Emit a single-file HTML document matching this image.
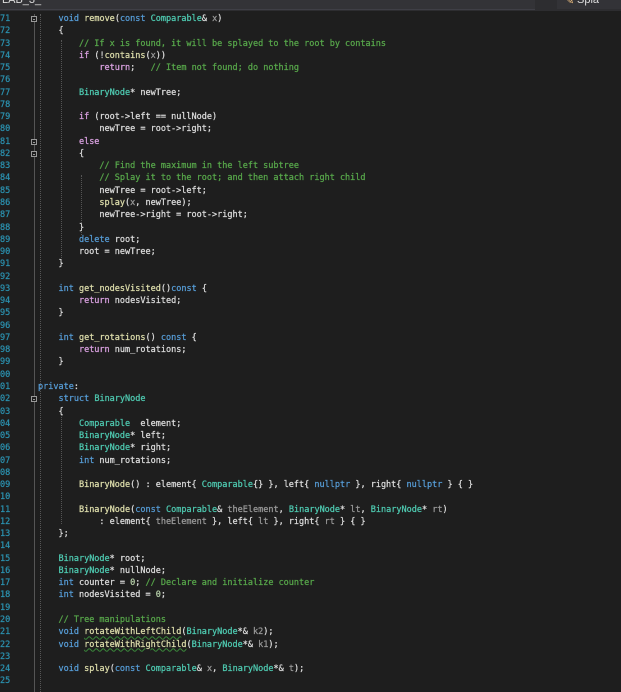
<!DOCTYPE html>
<html><head><style>
body{margin:0;width:621px;height:692px;background:#1e1e1e;overflow:hidden;position:relative;font-family:"Liberation Mono",monospace;}
.top{position:absolute;left:0;top:0;width:621px;height:11px;background:#2d2d30;}
.top .a{position:absolute;left:0;top:0;width:535px;height:9px;background:#333337;border-bottom:1px solid #3f3f46;}
.top .b{position:absolute;left:557px;top:0;width:64px;height:9px;background:#333337;}
.top span{position:absolute;color:#ddd;font-family:"Liberation Sans",sans-serif;font-size:11px;top:-6px;}
pre{position:absolute;margin:0;top:13px;font-size:8.5px;line-height:12.26px;color:#dcdcdc;-webkit-text-stroke:0.25px currentColor;}
#ln{left:0;color:#2b91af;}
#code{left:38px;}
.k{color:#569cd6}.t{color:#4ec9b0}.f{color:#dcdcaa}.c{color:#57a64a}.p{color:#9a9a9a}.n{color:#b5cea8}.m{color:#d8a0df}
.fold{position:absolute;left:31px;width:6px;height:6px;border:1px solid #999;box-sizing:border-box;background:#1e1e1e;}
.fold:after{content:"";position:absolute;left:1px;top:2px;width:2px;height:1px;background:#999;}
.vl{position:absolute;left:34px;top:14px;width:1px;height:678px;background:#555;}
.g{position:absolute;border-left:1px dotted #555;}
.sq{text-decoration:underline wavy #3a8a3a;text-decoration-thickness:1px;}
</style></head><body>
<div class="top"><div class="a"><span style="left:2px">LAB_3_</span></div><div class="b"><span style="left:8px;color:#f0c080">✎</span><span style="left:20px">Spla</span></div></div>
<div class="vl"></div>
<div class="g" style="left:40px;top:14px;height:678px"></div>
<div class="g" style="left:61px;top:40px;height:220px"></div>
<div class="g" style="left:81px;top:175px;height:60px"></div>
<div class="g" style="left:61px;top:414px;height:110px"></div>
<div class="fold" style="top:16px"></div>
<div class="fold" style="top:139px"></div>
<div class="fold" style="top:151px"></div>
<div class="fold" style="top:396px"></div>
<pre id="ln">71
72
73
74
75
76
77
78
79
80
81
82
83
84
85
86
87
88
89
90
91
92
93
94
95
96
97
98
99
00
01
02
03
04
05
06
07
08
09
10
11
12
13
14
15
16
17
18
19
20
21
22
23
24
25</pre>
<pre id="code">    <span class="k">void</span> <span class="f">remove</span>(<span class="k">const</span> <span class="t">Comparable</span>&amp; <span class="p">x</span>)
    {
        <span class="c">// If x is found, it will be splayed to the root by contains</span>
        <span class="m">if</span> (!<span class="f">contains</span>(<span class="p">x</span>))
            <span class="m">return</span>;   <span class="c">// Item not found; do nothing</span>

        <span class="t">BinaryNode</span>* newTree;

        <span class="m">if</span> (root-&gt;left == nullNode)
            newTree = root-&gt;right;
        <span class="m">else</span>
        {
            <span class="c">// Find the maximum in the left subtree</span>
            <span class="c">// Splay it to the root; and then attach right child</span>
            newTree = root-&gt;left;
            <span class="f">splay</span>(<span class="p">x</span>, newTree);
            newTree-&gt;right = root-&gt;right;
        }
        <span class="k">delete</span> root;
        root = newTree;
    }

    <span class="k">int</span> <span class="f">get_nodesVisited</span>()<span class="k">const</span> {
        <span class="m">return</span> nodesVisited;
    }

    <span class="k">int</span> <span class="f">get_rotations</span>() <span class="k">const</span> {
        <span class="m">return</span> num_rotations;
    }

<span class="k">private</span>:
    <span class="k">struct</span> <span class="t">BinaryNode</span>
    {
        <span class="t">Comparable</span>  element;
        <span class="t">BinaryNode</span>* left;
        <span class="t">BinaryNode</span>* right;
        <span class="k">int</span> num_rotations;

        <span class="f">BinaryNode</span>() : element{ <span class="t">Comparable</span>{} }, left{ <span class="k">nullptr</span> }, right{ <span class="k">nullptr</span> } { }

        <span class="f">BinaryNode</span>(<span class="k">const</span> <span class="t">Comparable</span>&amp; <span class="p">theElement</span>, <span class="t">BinaryNode</span>* <span class="p">lt</span>, <span class="t">BinaryNode</span>* <span class="p">rt</span>)
            : element{ <span class="p">theElement</span> }, left{ <span class="p">lt</span> }, right{ <span class="p">rt</span> } { }
    };

    <span class="t">BinaryNode</span>* root;
    <span class="t">BinaryNode</span>* nullNode;
    <span class="k">int</span> counter = <span class="n">0</span>; <span class="c">// Declare and initialize counter</span>
    <span class="k">int</span> nodesVisited = <span class="n">0</span>;

    <span class="c">// Tree manipulations</span>
    <span class="k">void</span> <span class="f sq">rotateWithLeftChild</span>(<span class="t">BinaryNode</span>*&amp; <span class="p">k2</span>);
    <span class="k">void</span> <span class="f sq">rotateWithRightChild</span>(<span class="t">BinaryNode</span>*&amp; <span class="p">k1</span>);

    <span class="k">void</span> <span class="f">splay</span>(<span class="k">const</span> <span class="t">Comparable</span>&amp; <span class="p">x</span>, <span class="t">BinaryNode</span>*&amp; <span class="p">t</span>);
</pre>
</body></html>
